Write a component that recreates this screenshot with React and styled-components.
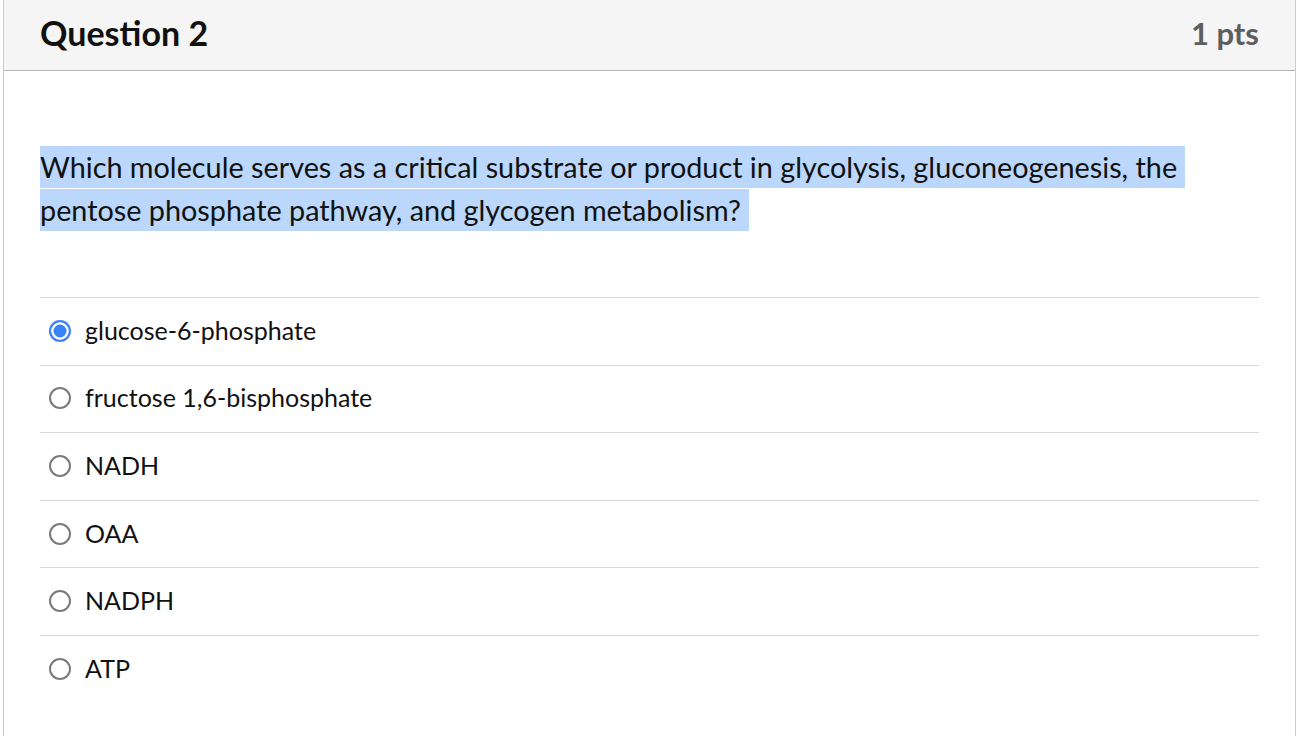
import React from "react";
import styled, { createGlobalStyle } from "styled-components";

const GlobalStyle = createGlobalStyle`
  html, body {
    margin: 0;
    padding: 0;
    background: #fff;
  }
  body {
    font-family: Lato, "Noto Sans", sans-serif;
    color: #111;
  }
`;

const answers = [
  { id: "a1", label: "glucose-6-phosphate", checked: true },
  { id: "a2", label: "fructose 1,6-bisphosphate" },
  { id: "a3", label: "NADH" },
  { id: "a4", label: "OAA" },
  { id: "a5", label: "NADPH" },
  { id: "a6", label: "ATP" },
];

const App = () => {
  return (
    <>
      <GlobalStyle />
      <Page>
        <QuestionCard>
          <Header>
            <Title>Question 2</Title>
            <Points>1 pts</Points>
          </Header>
          <Body>
            <QuestionText>
              <Highlight>
                Which molecule serves as a critical substrate or product in
                glycolysis, gluconeogenesis, the pentose phosphate pathway, and
                glycogen metabolism?
              </Highlight>
            </QuestionText>
            <AnswerList>
              {answers.map((item) => (
                <AnswerRow key={item.id}>
                  <Radio checked={item.checked} />
                  <AnswerLabel>{item.label}</AnswerLabel>
                </AnswerRow>
              ))}
            </AnswerList>
          </Body>
        </QuestionCard>
      </Page>
    </>
  );
};

const Page = styled.div`
  padding-left: 3px;
  width: 1296px;
  box-sizing: border-box;
`;

const QuestionCard = styled.div`
  border-left: 1px solid #c7cdd1;
  border-right: 1px solid #c7cdd1;
  min-height: 736px;
  box-sizing: border-box;
`;

const Header = styled.div`
  display: flex;
  align-items: center;
  justify-content: space-between;
  height: 70px;
  padding: 0 36px 0 36px;
  background: #f5f5f5;
  border-bottom: 1px solid #b5b5b5;
`;

const Title = styled.h2`
  margin: 0 0 5px;
  font-size: 34px;
  font-weight: 700;
  color: #111;
`;

const Points = styled.span`
  margin-bottom: 5px;
  font-size: 31px;
  font-weight: 700;
  color: #5e5e5e;
`;

const Body = styled.div`
  padding: 0 36px;
`;

const QuestionText = styled.p`
  margin: 75px 0 0;
  font-size: 28.8px;
  line-height: 42.5px;
  color: #111;
`;

const Highlight = styled.span`
  background: #bbd7fb;
  padding: 4px 8px 4px 0;
  box-decoration-break: clone;
  -webkit-box-decoration-break: clone;
`;

const AnswerList = styled.div`
  margin-top: 66px;
  border-top: 1px solid #dadada;
`;

const AnswerRow = styled.label`
  display: flex;
  align-items: center;
  height: 67.6px;
  box-sizing: border-box;
  border-bottom: 1px solid #dadada;
  &:last-child {
    border-bottom: none;
  }
`;

const Radio = styled.span`
  width: 22px;
  height: 22px;
  margin: 0 14px 1px 9px;
  border-radius: 50%;
  box-sizing: border-box;
  border: ${({ checked }) => (checked ? "2.5px solid #3a82f7" : "2px solid #7a7a7a")};
  background: ${({ checked }) => (checked ? "#3a82f7" : "#fff")};
  box-shadow: ${({ checked }) => (checked ? "inset 0 0 0 2.5px #fff" : "none")};
  flex-shrink: 0;
`;

const AnswerLabel = styled.span`
  margin-bottom: 3px;
  font-size: 25px;
  color: #111;
`;

export default App;
